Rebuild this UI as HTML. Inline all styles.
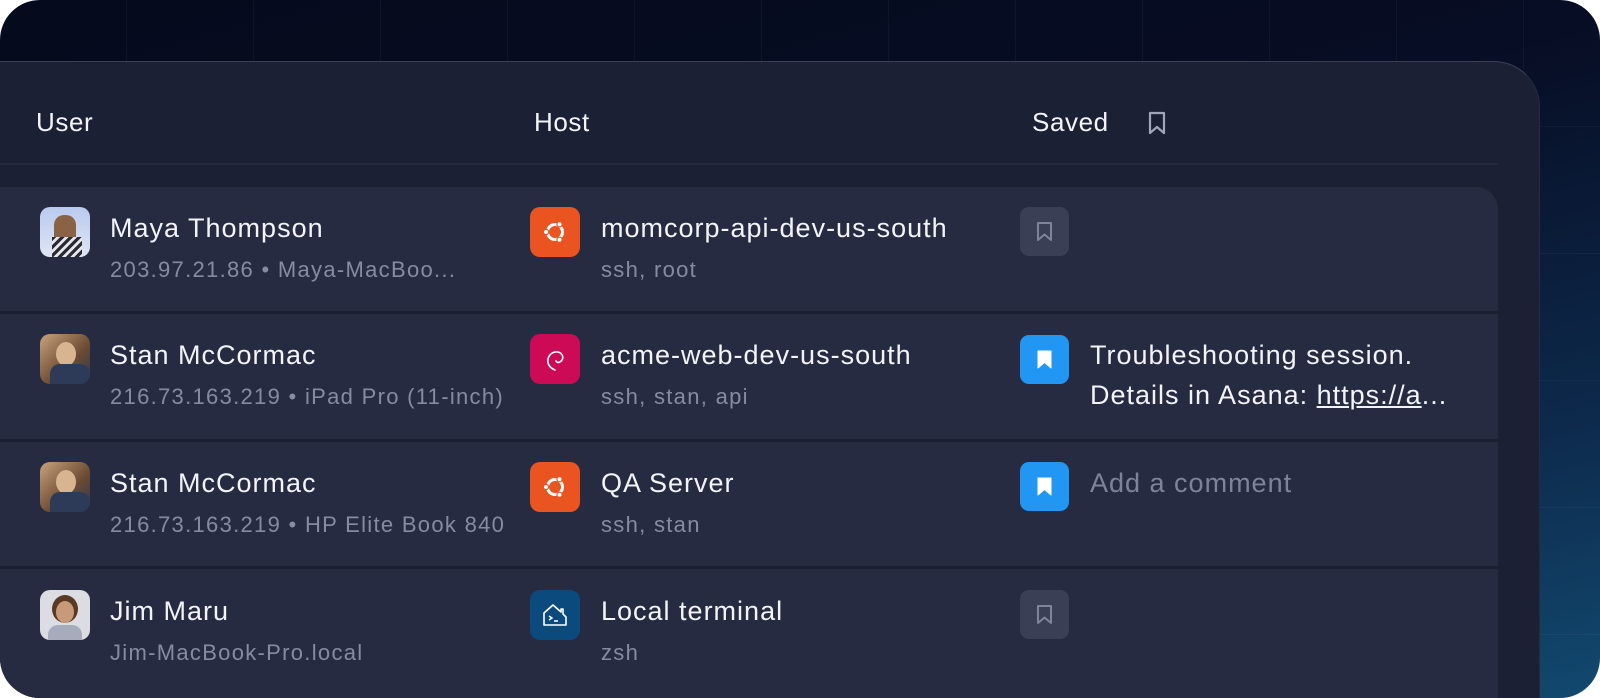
<!DOCTYPE html>
<html><head><meta charset="utf-8"><style>
*{margin:0;padding:0;box-sizing:border-box}
html,body{width:1600px;height:698px;background:#fff;overflow:hidden}
body{font-family:"Liberation Sans",sans-serif}
.frame{position:absolute;left:0;top:0;width:1600px;height:698px;border-radius:40px;overflow:hidden;
background:linear-gradient(165deg,#050a1c 0%,#070d24 40%,#0d2a4c 75%,#12496f 100%)}
.grid{position:absolute;inset:0;
background-image:linear-gradient(90deg,rgba(255,255,255,.035) 1px,transparent 1px),linear-gradient(0deg,rgba(255,255,255,.035) 1px,transparent 1px);
background-size:127px 127px;background-position:126px 0,0 0}
.panel{position:absolute;left:-20px;top:61px;width:1560px;height:637px;background:#1c2034;border-radius:0 46px 0 0;border-top:1px solid #3a3f55;border-right:1px solid #262b40}
.hdr{position:absolute;top:107px;font-size:26px;letter-spacing:.6px;color:#f2f4f8}
.hline{position:absolute;left:0;top:163px;width:1498px;height:2px;background:#23283c}
.rows{position:absolute;left:0;top:187px;width:1498px;height:511px;background:#262b41;border-radius:0 22px 0 0}
.sep{position:absolute;left:0;width:1498px;height:3px;background:#1c2033}
.ico{position:absolute;width:50px;height:50px;border-radius:10px;overflow:hidden}
.name{position:absolute;font-size:27px;letter-spacing:1px;color:#f2f4f8;white-space:nowrap}
.sub{position:absolute;font-size:22px;letter-spacing:1.3px;color:#858ca2;white-space:nowrap}
.bm{position:absolute;width:49px;height:49px;border-radius:9px}
.g{background:#3a3f55}.b{background:#2196f3}
</style></head><body>
<div class="frame">
<div class="grid"></div>
<div class="panel"></div>
<div class="hdr" style="left:36px">User</div>
<div class="hdr" style="left:534px">Host</div>
<div class="hdr" style="left:1032px">Saved</div>
<svg style="position:absolute;left:1147px;top:111px" width="20" height="25" viewBox="0 0 20 25"><path d="M3 2h14v20l-7-6-7 6z" fill="none" stroke="#a0a6b8" stroke-width="2.2" stroke-linejoin="round"/></svg>
<div class="hline"></div>
<div class="rows"></div>
<div class="sep" style="top:311px"></div>
<div class="sep" style="top:439px"></div>
<div class="sep" style="top:566px"></div>

<div class="ico" style="left:40px;top:207px;background:linear-gradient(180deg,#b9c9ee,#dfe6f4)"><div style="position:absolute;left:14px;top:8px;width:22px;height:34px;border-radius:10px 10px 4px 4px;background:#8a6346"></div><div style="position:absolute;left:12px;top:30px;width:30px;height:20px;background:repeating-linear-gradient(135deg,#2a2a33 0 3px,#e6e6ee 3px 6px)"></div></div>
<div class="ico" style="left:40px;top:334px;background:linear-gradient(135deg,#c9a27a,#6b4a33 60%,#2a3850)"><div style="position:absolute;left:16px;top:8px;width:20px;height:24px;border-radius:50%;background:#d8b491"></div><div style="position:absolute;left:10px;top:30px;width:40px;height:20px;border-radius:10px 10px 0 0;background:#2d3b58"></div></div>
<div class="ico" style="left:40px;top:462px;background:linear-gradient(135deg,#c9a27a,#6b4a33 60%,#2a3850)"><div style="position:absolute;left:16px;top:8px;width:20px;height:24px;border-radius:50%;background:#d8b491"></div><div style="position:absolute;left:10px;top:30px;width:40px;height:20px;border-radius:10px 10px 0 0;background:#2d3b58"></div></div>
<div class="ico" style="left:40px;top:590px;background:#dcdde3"><div style="position:absolute;left:12px;top:5px;width:26px;height:28px;border-radius:50%;background:#5a3a24"></div><div style="position:absolute;left:16px;top:11px;width:18px;height:22px;border-radius:50%;background:#c89a7a"></div><div style="position:absolute;left:8px;top:35px;width:34px;height:15px;border-radius:10px 10px 0 0;background:#a7acbc"></div></div>

<div class="name" style="left:110px;top:213px">Maya Thompson</div>
<div class="sub" style="left:110px;top:257px">203.97.21.86 • Maya-MacBoo...</div>
<div class="name" style="left:110px;top:340px">Stan McCormac</div>
<div class="sub" style="left:110px;top:384px">216.73.163.219 • iPad Pro (11-inch)</div>
<div class="name" style="left:110px;top:468px">Stan McCormac</div>
<div class="sub" style="left:110px;top:512px">216.73.163.219 • HP Elite Book 840</div>
<div class="name" style="left:110px;top:596px">Jim Maru</div>
<div class="sub" style="left:110px;top:640px">Jim-MacBook-Pro.local</div>

<div class="ico" style="left:530px;top:207px;background:#e95420"><svg width="50" height="50" viewBox="0 0 50 50"><circle cx="25" cy="25" r="7.5" fill="none" stroke="#fff" stroke-width="3"/><circle cx="16" cy="25" r="2.6" fill="#fff" stroke="#e95420" stroke-width="1.2"/><circle cx="29.5" cy="17.2" r="2.6" fill="#fff" stroke="#e95420" stroke-width="1.2"/><circle cx="29.5" cy="32.8" r="2.6" fill="#fff" stroke="#e95420" stroke-width="1.2"/></svg></div>
<div class="ico" style="left:530px;top:334px;background:#cc0a55"><svg width="50" height="50" viewBox="0 0 50 50"><path d="M25 36c-5-2-8-6-7-11 1-5 6-8 10-7 4 1 6 5 4 8-2 3-5 3-6 1" fill="none" stroke="#fff" stroke-width="1.6" stroke-linecap="round"/></svg></div>
<div class="ico" style="left:530px;top:462px;background:#e95420"><svg width="50" height="50" viewBox="0 0 50 50"><circle cx="25" cy="25" r="7.5" fill="none" stroke="#fff" stroke-width="3"/><circle cx="16" cy="25" r="2.6" fill="#fff" stroke="#e95420" stroke-width="1.2"/><circle cx="29.5" cy="17.2" r="2.6" fill="#fff" stroke="#e95420" stroke-width="1.2"/><circle cx="29.5" cy="32.8" r="2.6" fill="#fff" stroke="#e95420" stroke-width="1.2"/></svg></div>
<div class="ico" style="left:530px;top:590px;background:#0b4a7d"><svg width="50" height="50" viewBox="0 0 50 50"><path d="M14 23l9-8 8 7v-3h2v5l3 3v8H14z" fill="none" stroke="#fff" stroke-width="1.6" stroke-linejoin="round"/><path d="M19 26l3 2-3 2M24 31h4" fill="none" stroke="#fff" stroke-width="1.4"/></svg></div>

<div class="name" style="left:601px;top:213px">momcorp-api-dev-us-south</div>
<div class="sub" style="left:601px;top:257px">ssh, root</div>
<div class="name" style="left:601px;top:340px">acme-web-dev-us-south</div>
<div class="sub" style="left:601px;top:384px">ssh, stan, api</div>
<div class="name" style="left:601px;top:468px">QA Server</div>
<div class="sub" style="left:601px;top:512px">ssh, stan</div>
<div class="name" style="left:601px;top:596px">Local terminal</div>
<div class="sub" style="left:601px;top:640px">zsh</div>

<div class="bm g" style="left:1020px;top:207px"><svg width="49" height="49" viewBox="0 0 49 49"><path d="M18 16h13v17l-6.5-5.5L18 33z" fill="none" stroke="#7f8598" stroke-width="2" stroke-linejoin="round"/></svg></div>
<div class="bm b" style="left:1020px;top:335px"><svg width="49" height="49" viewBox="0 0 49 49"><path d="M18 16h13v17l-6.5-5.5L18 33z" fill="#fff" stroke="#fff" stroke-width="1" stroke-linejoin="round"/></svg></div>
<div class="bm b" style="left:1020px;top:462px"><svg width="49" height="49" viewBox="0 0 49 49"><path d="M18 16h13v17l-6.5-5.5L18 33z" fill="#fff" stroke="#fff" stroke-width="1" stroke-linejoin="round"/></svg></div>
<div class="bm g" style="left:1020px;top:590px"><svg width="49" height="49" viewBox="0 0 49 49"><path d="M18 16h13v17l-6.5-5.5L18 33z" fill="none" stroke="#7f8598" stroke-width="2" stroke-linejoin="round"/></svg></div>

<div class="name" style="left:1090px;top:340px">Troubleshooting session.</div>
<div class="name" style="left:1090px;top:380px">Details in Asana: <span style="text-decoration:underline">https://a</span>...</div>
<div class="name" style="left:1090px;top:468px;color:#7d8499">Add a comment</div>
</div>
</body></html>
